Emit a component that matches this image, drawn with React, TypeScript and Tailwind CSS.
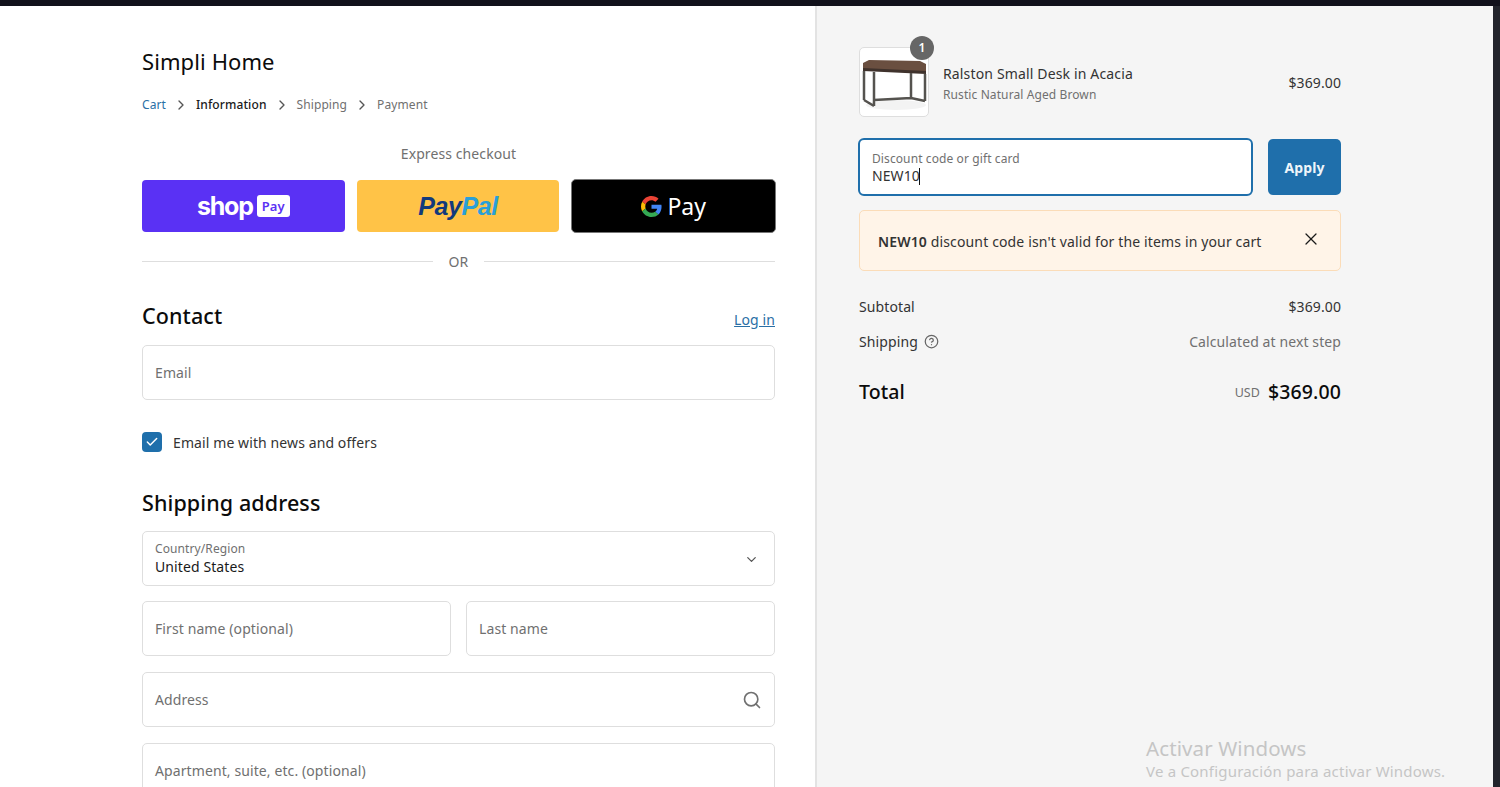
import React from 'react';
import { Check, ChevronDown, ChevronRight, CircleHelp, Search, X } from 'lucide-react';

const Field = ({ label, className = '', children }: { label: string; className?: string; children?: React.ReactNode }) => (
  <div className={`flex h-[55px] items-center justify-between rounded-[5px] border border-[#dedede] bg-white px-3 text-[14px] text-[#707070] ${className}`}>
    <span>{label}</span>
    {children}
  </div>
);

const GoogleG = () => (
  <svg width="21" height="21" viewBox="0 0 48 48">
    <path fill="#EA4335" d="M24 9.5c3.5 0 6.7 1.2 9.2 3.6l6.9-6.9C35.9 2.4 30.500 0 24 0 14.600 0 6.500 5.400 2.600 13.200l8 6.200C12.500 13.600 17.800 9.500 24 9.500z" />
    <path fill="#4285F4" d="M47 24.500c0-1.600-.1-3.100-.4-4.500H24v9h12.900c-.6 3-2.200 5.500-4.700 7.200l7.700 6C44.400 37.900 47 31.800 47 24.500z" />
    <path fill="#FBBC05" d="M10.600 28.600c-.5-1.400-.8-3-.8-4.600s.3-3.200.8-4.600l-8-6.200C.9 16.500 0 20.100 0 24s.9 7.500 2.600 10.800l8-6.200z" />
    <path fill="#34A853" d="M24 48c6.500 0 11.900-2.100 15.900-5.800l-7.700-6c-2.200 1.500-4.900 2.300-8.200 2.300-6.200 0-11.500-4.100-13.400-9.900l-8 6.200C6.500 42.600 14.600 48 24 48z" />
  </svg>
);

const DeskPicture = () => (
  <svg width="68" height="68" viewBox="0 0 68 68">
    <ellipse cx="36" cy="57" rx="30" ry="5" fill="#f3f3f3" />
    <path d="M3 15 L9 12 L60 13 L66 16 L66 25 L3 22 Z" fill="#6a4f40" />
    <path d="M3 20 L66 23 L66 26 L3 23 Z" fill="#3f322c" />
    <path d="M4 23 L4 52 M14 24 L14 58 M51 25 L51 50 M65 26 L65 53 M4 52 L14 58 M14 52 L51 50 M51 50 L65 53" stroke="#55534f" strokeWidth="2.500" fill="none" />
  </svg>
);

export default function App() {
  return (
    <div className="relative h-[787px] w-[1500px] overflow-hidden bg-white font-['Noto_Sans',sans-serif] text-[14px] tracking-[0.1px] text-[#1a1a1a]">
      <div className="h-[6px] bg-[#11111b]" />
      <div className="flex h-[781px]">
        {/* Checkout form */}
        <main className="w-[817px] shrink-0 border-r-2 border-[#e3e3e3] pl-[142px] pr-[40px] pt-[39px]">
          <h1 className="text-[22px] leading-[32px] text-[#0b0b0b]">Simpli Home</h1>

          <nav className="mt-[18px] flex h-[20px] items-center text-[12px] text-[#707070]">
            <span className="text-[#2a6fa5]">Cart</span>
            <ChevronRight size={16} className="mx-[7px] text-[#555555]" />
            <span className="font-medium text-[#1a1a1a]">Information</span>
            <ChevronRight size={16} className="mx-[7px] text-[#555555]" />
            <span>Shipping</span>
            <ChevronRight size={16} className="mx-[7px] text-[#555555]" />
            <span>Payment</span>
          </nav>

          <p className="mt-[29px] text-center text-[14px] leading-[20px] text-[#707070]">Express checkout</p>

          <div className="mt-[16px] flex w-[634px] gap-[12px]">
            <div className="flex h-[52px] w-[203px] items-center justify-center gap-[4px] rounded-[4px] bg-[#5a31f4] text-white">
              <span className="font-['Inter',sans-serif] text-[25px] font-bold leading-none tracking-[-1.2px]">shop</span>
              <span className="rounded-[3px] bg-white px-[5px] py-[2px] text-[13px] font-semibold leading-[18px] text-[#5a31f4]">Pay</span>
            </div>
            <div className="flex h-[52px] w-[203px] items-center justify-center rounded-[4px] bg-[#ffc347] font-['Liberation_Sans',sans-serif] text-[25px] font-bold italic leading-none tracking-[-0.4px]">
              <span className="text-[#123a7c]">Pay</span>
              <span className="text-[#2a9fd8]">Pal</span>
            </div>
            <div className="-mt-px flex h-[54px] w-[205px] items-center justify-center gap-[5px] rounded-[5px] border border-[#777777] bg-black text-white">
              <GoogleG />
              <span className="text-[23px] leading-none tracking-normal">Pay</span>
            </div>
          </div>

          <div className="mt-[18px] flex h-[20px] items-center gap-[16px] text-[14px] text-[#707070]">
            <div className="h-px flex-1 bg-[#dedede]" />
            <span>OR</span>
            <div className="h-px flex-1 bg-[#dedede]" />
          </div>

          <div className="mt-[29px] flex items-end justify-between">
            <h2 className="text-[21.500px] font-medium leading-[32px] text-[#0b0b0b]">Contact</h2>
            <a className="pb-[2px] text-[14px] text-[#2a6fa5] underline">Log in</a>
          </div>

          <Field label="Email" className="mt-[13px]" />

          <label className="mt-[31px] flex h-[22px] items-center gap-[11px]">
            <span className="flex h-[20px] w-[20px] items-center justify-center rounded-[4px] bg-[#1f6fab]">
              <Check size={14} strokeWidth={2.5} className="text-white" />
            </span>
            <span className="text-[14px] text-[#333333]">Email me with news and offers</span>
          </label>

          <h2 className="mt-[34px] text-[21.500px] font-medium leading-[32px] text-[#0b0b0b]">Shipping address</h2>

          <div className="mt-[12px] flex h-[55px] items-center justify-between rounded-[5px] border border-[#dedede] px-3">
            <div>
              <p className="text-[12px] leading-[16px] text-[#707070]">Country/Region</p>
              <p className="text-[14px] leading-[20px] text-[#1a1a1a]">United States</p>
            </div>
            <ChevronDown size={15} className="mr-[3px] mt-[2px] text-[#555555]" />
          </div>

          <div className="mt-[15px] flex gap-[15px]">
            <Field label="First name (optional)" className="flex-1" />
            <Field label="Last name" className="flex-1" />
          </div>

          <Field label="Address" className="mt-[16px]">
            <Search size={20} className="text-[#707070]" />
          </Field>

          <Field label="Apartment, suite, etc. (optional)" className="mt-[16px]" />
        </main>

        {/* Order summary */}
        <aside className="w-[676px] shrink-0 bg-[#f5f5f5] pl-[42px] pr-[152px] pt-[41px]">
          <div className="flex items-center">
            <div className="relative flex h-[70px] w-[70px] items-center justify-center rounded-[5px] border border-[#dedede] bg-white">
              <DeskPicture />
              <span className="absolute -right-[6px] -top-[12px] flex h-[24px] w-[24px] items-center justify-center rounded-full bg-[#666666] text-[12px] font-semibold text-white">1</span>
            </div>
            <div className="ml-[14px] mt-[4px] flex-1">
              <p className="text-[14px] leading-[20px] tracking-[0.15px] text-[#333333]">Ralston Small Desk in Acacia</p>
              <p className="mt-[2px] text-[12px] leading-[18px] text-[#707070]">Rustic Natural Aged Brown</p>
            </div>
            <span className="text-[14px] text-[#333333]">$369.00</span>
          </div>

          <div className="mt-[21px] flex gap-[15px]">
            <div className="-ml-px h-[58px] flex-1 rounded-[6px] border-2 border-[#1f6fab] bg-white px-3 pt-[11px]">
              <p className="text-[12px] leading-[15px] text-[#707070]">Discount code or gift card</p>
              <p className="flex items-center text-[14px] leading-[20px] text-[#333333]">
                NEW10
                <span className="-ml-px h-[17px] w-px bg-[#111111]" />
              </p>
            </div>
            <button className="mt-px h-[56px] w-[73px] rounded-[5px] bg-[#1f6fab] text-[14px] font-bold text-[#eef5fa]">Apply</button>
          </div>

          <div className="mt-[14px] flex h-[61px] items-center justify-between rounded-[5px] border border-[#fbdcb8] bg-[#fff4e8] pl-[18px] pr-[19px]">
            <p className="mt-px text-[14px] tracking-[0.14px] text-[#333333]">
              <span className="font-semibold">NEW10</span> discount code isn't valid for the items in your cart
            </p>
            <X size={20} strokeWidth={1.5} className="-mt-[3px] text-[#1a1a1a]" />
          </div>

          <div className="mt-[25px] flex h-[20px] items-center justify-between text-[14px] text-[#333333]">
            <span>Subtotal</span>
            <span>$369.00</span>
          </div>

          <div className="mt-[15px] flex h-[20px] items-center justify-between text-[14px] text-[#333333]">
            <span className="flex items-center gap-[6px]">
              Shipping
              <CircleHelp size={15} className="text-[#666666]" />
            </span>
            <span className="text-[#707070]">Calculated at next step</span>
          </div>

          <div className="mt-[25px] flex h-[32px] items-center justify-between">
            <span className="text-[19.500px] font-medium text-[#0b0b0b]">Total</span>
            <span className="flex items-center gap-[8px]">
              <span className="mt-[3px] text-[12.500px] text-[#707070]">USD</span>
              <span className="text-[19.500px] font-medium text-[#0b0b0b]">$369.00</span>
            </span>
          </div>
        </aside>

        <div className="flex-1 bg-[#22242c]" />
      </div>

      {/* Windows activation watermark */}
      <div className="absolute left-[1146px] top-[735px] text-[#c5c5c5]">
        <p className="text-[20.500px] leading-[26px]">Activar Windows</p>
        <p className="text-[15px] leading-[20px] tracking-[0.2px]">Ve a Configuración para activar Windows.</p>
      </div>
    </div>
  );
}
